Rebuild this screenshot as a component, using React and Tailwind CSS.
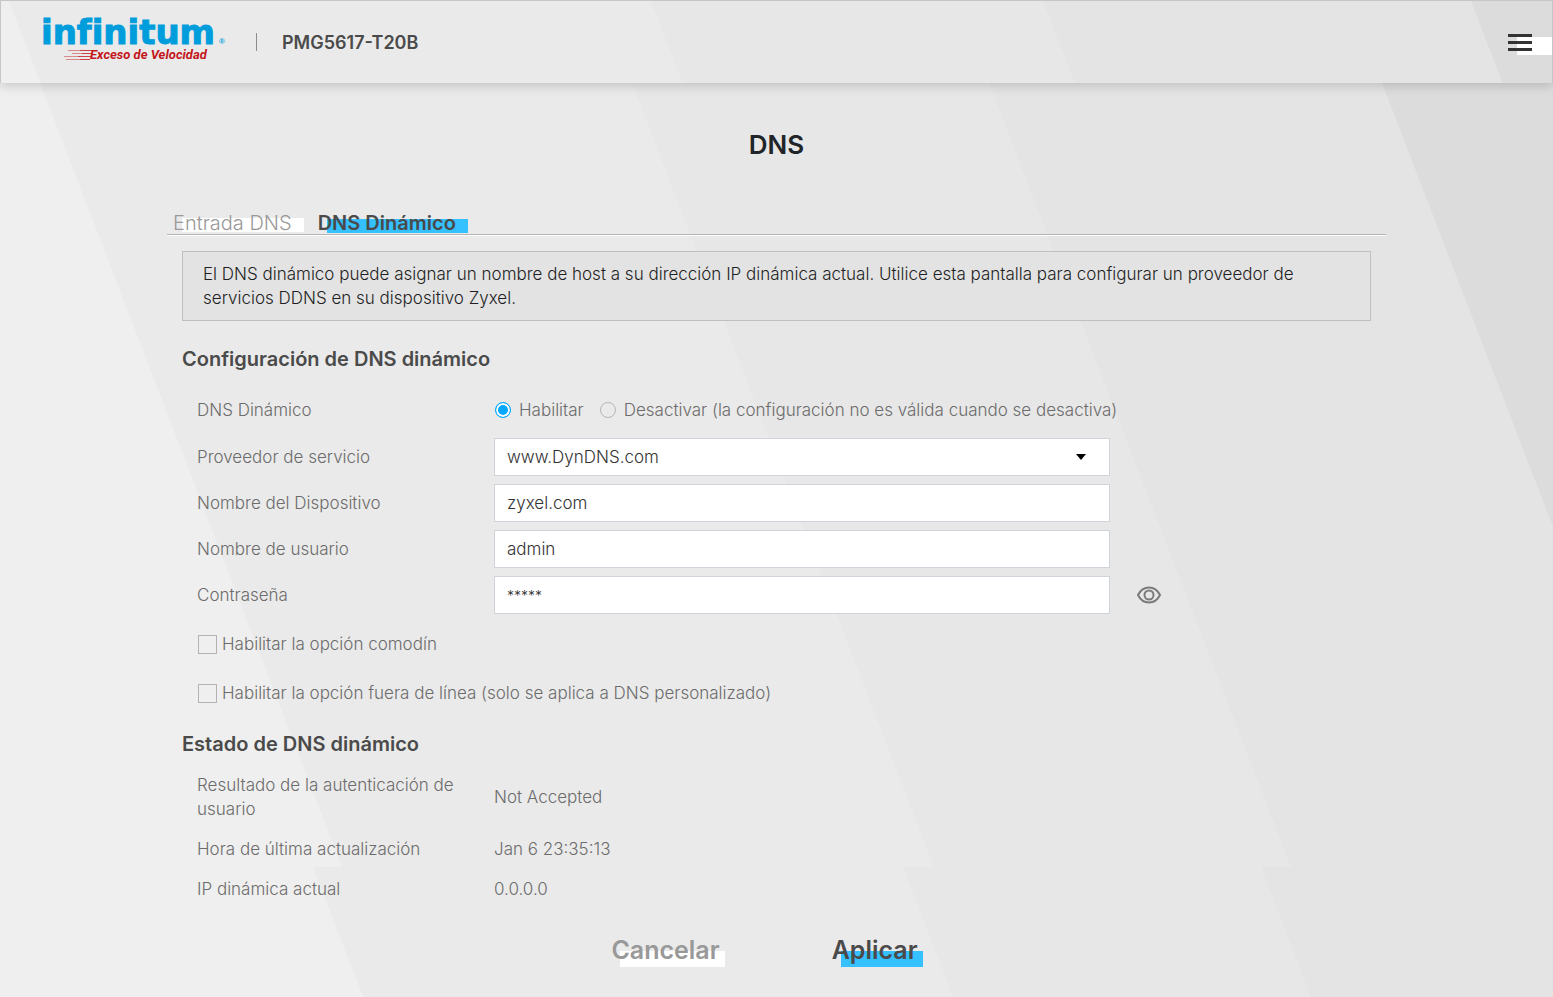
import React, { useState } from 'react';
import clsx from 'clsx';

const HIGHLIGHT = "relative isolate after:absolute after:-z-10 after:content-['']";

const providers = ['www.DynDNS.com', 'www.no-ip.com', 'Personalizado'];

const status = [
  { label: 'Resultado de la autenticación de usuario', value: 'Not Accepted' },
  { label: 'Hora de última actualización', value: 'Jan 6 23:35:13' },
  { label: 'IP dinámica actual', value: '0.0.0.0' },
];

const bandColors = ['#eaeaea', '#e7e7e7', '#e4e4e4', '#dcdcdc'];

// one tile of slanted grey bands, lighter on the left
const Bands = ({ y = 0, xs }) => (
  <g transform={`translate(0 ${y})`}>
    <rect width="1920" height="867" fill="#efefef" />
    {xs.map((x, i) => (
      <path key={x} d={`M${x} 0H1920V867H${x + 334}Z`} fill={bandColors[i]} />
    ))}
  </g>
);

const Backdrop = () => (
  <svg className="absolute inset-0 -z-10 h-full w-full" viewBox="0 0 1553 997" preserveAspectRatio="xMinYMin slice" aria-hidden="true">
    <Bands xs={[8, 600, 957, 1350]} />
    <Bands y={867} xs={[313, 903, 1261, 1656]} />
  </svg>
);

const HeaderBackdrop = () => (
  <svg className="absolute inset-0 -z-10 h-full w-full" viewBox="0 0 1551 82" preserveAspectRatio="xMinYMin slice" aria-hidden="true">
    <Bands xs={[8, 650, 1042, 1470]} />
  </svg>
);

const Logo = () => (
  <svg className="h-[48px] w-[186px] overflow-visible" viewBox="0 0 186 48" role="img" aria-label="infinitum Exceso de Velocidad">
    <text x="-1" y="26" className="[font-variant-ligatures:none]" fill="#009ddc" stroke="#009ddc" strokeWidth="1" fontFamily="DejaVu Sans, sans-serif" fontWeight="700" fontSize="34">infinitum</text>
    <text x="177" y="26" fill="#009ddc" fontFamily="Liberation Sans, sans-serif" fontWeight="700" fontSize="8">®</text>
    <path d="M26 32.5H52M30 35.5H50M22 38.5H49M24 41.5H48" stroke="#c4161c" strokeWidth="1" opacity="0.45" />
    <path d="M38 32.5H52M40 35.5H50M36 38.5H49M38 41.5H48" stroke="#c4161c" strokeWidth="1" opacity="0.6" />
    <text x="48" y="41" fill="#c4161c" fontFamily="Roboto, sans-serif" fontWeight="700" fontStyle="italic" fontSize="13">Exceso de Velocidad</text>
  </svg>
);

const EyeIcon = () => (
  <svg className="h-[20px] w-[26px]" viewBox="0 0 26 20" fill="none" stroke="#7a7a7a" strokeWidth="2" aria-hidden="true">
    <path d="M2 10C4.500 5 8.500 2.500 13 2.500S21.500 5 24 10C21.500 15 17.500 17.500 13 17.500S4.500 15 2 10Z" />
    <circle cx="13" cy="10" r="4.500" />
  </svg>
);

const Field = ({ id, label, children, extra }) => (
  <div className="flex items-center">
    <label htmlFor={id} className="w-[297px] shrink-0 pr-4">{label}</label>
    <div className="relative w-full max-w-[616px]">{children}</div>
    {extra}
  </div>
);

const inputClass =
  'block h-[38px] w-full appearance-none border border-[#ced4da] bg-white px-3 font-light text-[#333] outline-none';

const Radio = ({ id, label, checked, onChange }) => (
  <span className="flex items-center gap-2">
    <input
      id={id}
      type="radio"
      name="ddns"
      checked={checked}
      onChange={onChange}
      className="h-4 w-4 appearance-none rounded-full border border-[#b5b5b5] checked:border-[#00a8ff] checked:bg-[#00a8ff] checked:shadow-[inset_0_0_0_2px_#fff]"
    />
    <label htmlFor={id}>{label}</label>
  </span>
);

const CheckRow = ({ id, label }) => (
  <div className="flex h-6 items-center gap-[5px]">
    <input
      id={id}
      type="checkbox"
      className="ml-px h-[19px] w-[19px] appearance-none border border-[#b3b3b3] checked:bg-[#35c0ff]"
    />
    <label htmlFor={id}>{label}</label>
  </div>
);

export default function App() {
  const [enabled, setEnabled] = useState(true);
  const [host, setHost] = useState('zyxel.com');
  const [user, setUser] = useState('admin');
  const [password, setPassword] = useState('*****');

  return (
    <div className="relative isolate min-h-screen overflow-hidden font-['Inter',sans-serif] text-[17px] leading-6 font-light text-[#6c6c6c]">
      <Backdrop />
      <header className="relative isolate flex h-[83px] items-center border border-b-0 border-[#c6c6c6] pl-[41px] shadow-[0_3px_10px_rgba(0,0,0,0.16)]">
        <HeaderBackdrop />
        <Logo />
        <span className="ml-7 h-[18px] w-px bg-[#8c8c8c]" />
        <span className="ml-[25px] pt-[2px] text-[18px] font-semibold text-[#4a4a4a]">PMG5617-T20B</span>
        <button
          type="button"
          aria-label="Menú"
          className={clsx(HIGHLIGHT, 'ml-auto flex w-11 flex-col gap-1 after:top-[3px] after:right-0 after:left-[9px] after:h-[18px] after:bg-white')}
        >
          <span className="h-[3px] w-6 bg-[#333]" />
          <span className="h-[3px] w-6 bg-[#333]" />
          <span className="h-[3px] w-6 bg-[#333]" />
        </button>
      </header>

      <main className="mx-auto w-full max-w-[1219px]">
        <h1 className="mt-[42px] text-center text-[26px] leading-10 font-semibold text-[#212529]">DNS</h1>

        <nav className="mt-[47px] flex gap-[26px] border-b border-[#b3b3b3] pl-[6px] text-[20px] leading-[22px] shadow-[0_1px_0_#fff]">
          <a
            href="#entrada"
            className={clsx(HIGHLIGHT, 'text-[#999] after:-right-3 after:bottom-[2px] after:left-[9px] after:h-[14px] after:bg-white')}
          >
            Entrada DNS
          </a>
          <a
            href="#dinamico"
            className={clsx(HIGHLIGHT, 'font-semibold text-[#4a4a4a] after:-right-3 after:bottom-px after:left-[9px] after:h-[14px] after:bg-[#35c0ff]')}
          >
            DNS Dinámico
          </a>
        </nav>

        <div className="px-[15px] pt-4">
          <p className="border border-[#bfbfbf] bg-[#e3e3e3] px-5 py-[10px] text-[#1f1f24]">
            El DNS dinámico puede asignar un nombre de host a su dirección IP dinámica actual. Utilice esta pantalla
            para configurar un proveedor de servicios DDNS en su dispositivo Zyxel.
          </p>

          <h2 className="mt-[23px] text-[20px] leading-[30px] font-semibold text-[#4a4a4a]">
            Configuración de DNS dinámico
          </h2>
          <form className="mt-[18px] flex flex-col gap-2 px-[15px]">
            <div className="mb-[2px] flex h-9 items-center">
              <span className="w-[298px] shrink-0">DNS Dinámico</span>
              <div className="flex gap-4">
                <Radio id="ddns-on" label="Habilitar" checked={enabled} onChange={() => setEnabled(true)} />
                <Radio
                  id="ddns-off"
                  label="Desactivar (la configuración no es válida cuando se desactiva)"
                  checked={!enabled}
                  onChange={() => setEnabled(false)}
                />
              </div>
            </div>
            <Field id="provider" label="Proveedor de servicio">
              <select id="provider" className={inputClass}>
                {providers.map((p) => (
                  <option key={p}>{p}</option>
                ))}
              </select>
              <svg className="pointer-events-none absolute top-4 right-6 h-[6px] w-[10px]" viewBox="0 0 10 6" aria-hidden="true">
                <path d="M0 0H10L5 6Z" fill="#000" />
              </svg>
            </Field>
            <Field id="host" label="Nombre del Dispositivo">
              <input id="host" className={inputClass} value={host} onChange={(e) => setHost(e.target.value)} />
            </Field>
            <Field id="user" label="Nombre de usuario">
              <input id="user" className={inputClass} value={user} onChange={(e) => setUser(e.target.value)} />
            </Field>
            <Field
              id="password"
              label="Contraseña"
              extra={
                <button type="button" aria-label="Mostrar contraseña" className="ml-[26px]">
                  <EyeIcon />
                </button>
              }
            >
              <input
                id="password"
                className={clsx(inputClass, 'text-[14px]')}
                value={password}
                onChange={(e) => setPassword(e.target.value)}
              />
            </Field>
            <div className="mt-[10px] flex flex-col gap-[25px]">
              <CheckRow id="wildcard" label="Habilitar la opción comodín" />
              <CheckRow id="offline" label="Habilitar la opción fuera de línea (solo se aplica a DNS personalizado)" />
            </div>
          </form>

          <h2 className="mt-6 text-[20px] leading-[30px] font-semibold text-[#4a4a4a]">Estado de DNS dinámico</h2>
          <dl className="mt-[14px] flex flex-col gap-4 px-[15px]">
            {status.map((s) => (
              <div key={s.label} className="flex items-center">
                <dt className="w-[297px] shrink-0 pr-4">{s.label}</dt>
                <dd>{s.value}</dd>
              </div>
            ))}
          </dl>
        </div>

        <div className="mt-[33px] flex justify-center gap-[112px] pr-6 pb-7 text-[25px] leading-8 font-semibold">
          <button
            type="button"
            className={clsx(HIGHLIGHT, 'text-[#999] after:-right-[5px] after:-bottom-px after:left-[9px] after:h-4 after:bg-white')}
          >
            Cancelar
          </button>
          <button
            type="button"
            className={clsx(HIGHLIGHT, 'text-[#4a4a4a] after:-right-[5px] after:-bottom-px after:left-[9px] after:h-4 after:bg-[#35c0ff]')}
          >
            Aplicar
          </button>
        </div>
      </main>
    </div>
  );
}
